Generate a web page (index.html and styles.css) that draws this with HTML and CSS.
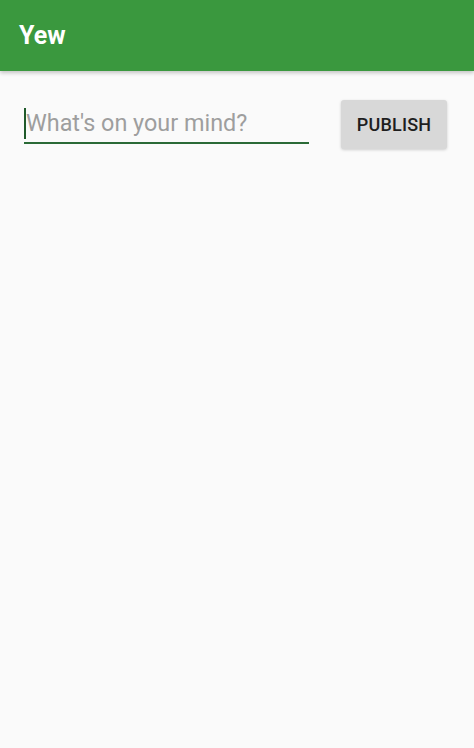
FILE: index.html
```html
<!DOCTYPE html>
<html>
<head>
<meta charset="utf-8">
<link rel="stylesheet" href="styles.css">
</head>
<body>
<header class="appbar"><h1 class="title">Yew</h1></header>
<main class="content">
  <div class="composer">
    <div class="field">
      <span class="cursor"></span>
      <span class="placeholder">What's on your mind?</span>
    </div>
    <button class="publish">PUBLISH</button>
  </div>
</main>
</body>
</html>
```
FILE: styles.css
```css
html, body {
  margin: 0;
  padding: 0;
  height: 100%;
  background: #fafafa;
  font-family: Roboto, "Noto Sans", sans-serif;
}
.appbar {
  height: 71px;
  background: #3a983e;
  box-shadow: 0 2px 4px rgba(0,0,0,0.22);
  display: flex;
  align-items: center;
  padding-left: 19px;
  position: relative;
  z-index: 1;
}
.title {
  margin: 0;
  color: #fff;
  font-size: 25px;
  font-weight: 700;
  line-height: 1;
  margin-top: 0;
}
.content {
  padding: 29px 27px 0 24px;
}
.composer {
  display: flex;
  align-items: flex-start;
  justify-content: space-between;
}
.field {
  width: 285px;
  height: 40px;
  margin-top: 2px;
  border-bottom: 2px solid #2a6a36;
  display: flex;
  align-items: center;
}
.cursor {
  width: 2px;
  height: 31px;
  background: #1f5a2a;
  margin-top: 2px;
}
.placeholder {
  color: #9e9e9e;
  font-size: 23.4px;
  margin-top: 2px;
}
.publish {
  width: 106px;
  height: 49px;
  border: none;
  border-radius: 3px;
  background: #d8d8d8;
  box-shadow: 0 1px 3px rgba(0,0,0,0.18);
  color: #1e1e1e;
  font-family: Roboto, sans-serif;
  font-weight: 500;
  font-size: 18px;
  letter-spacing: 0.2px;
  padding: 0;
}
```
